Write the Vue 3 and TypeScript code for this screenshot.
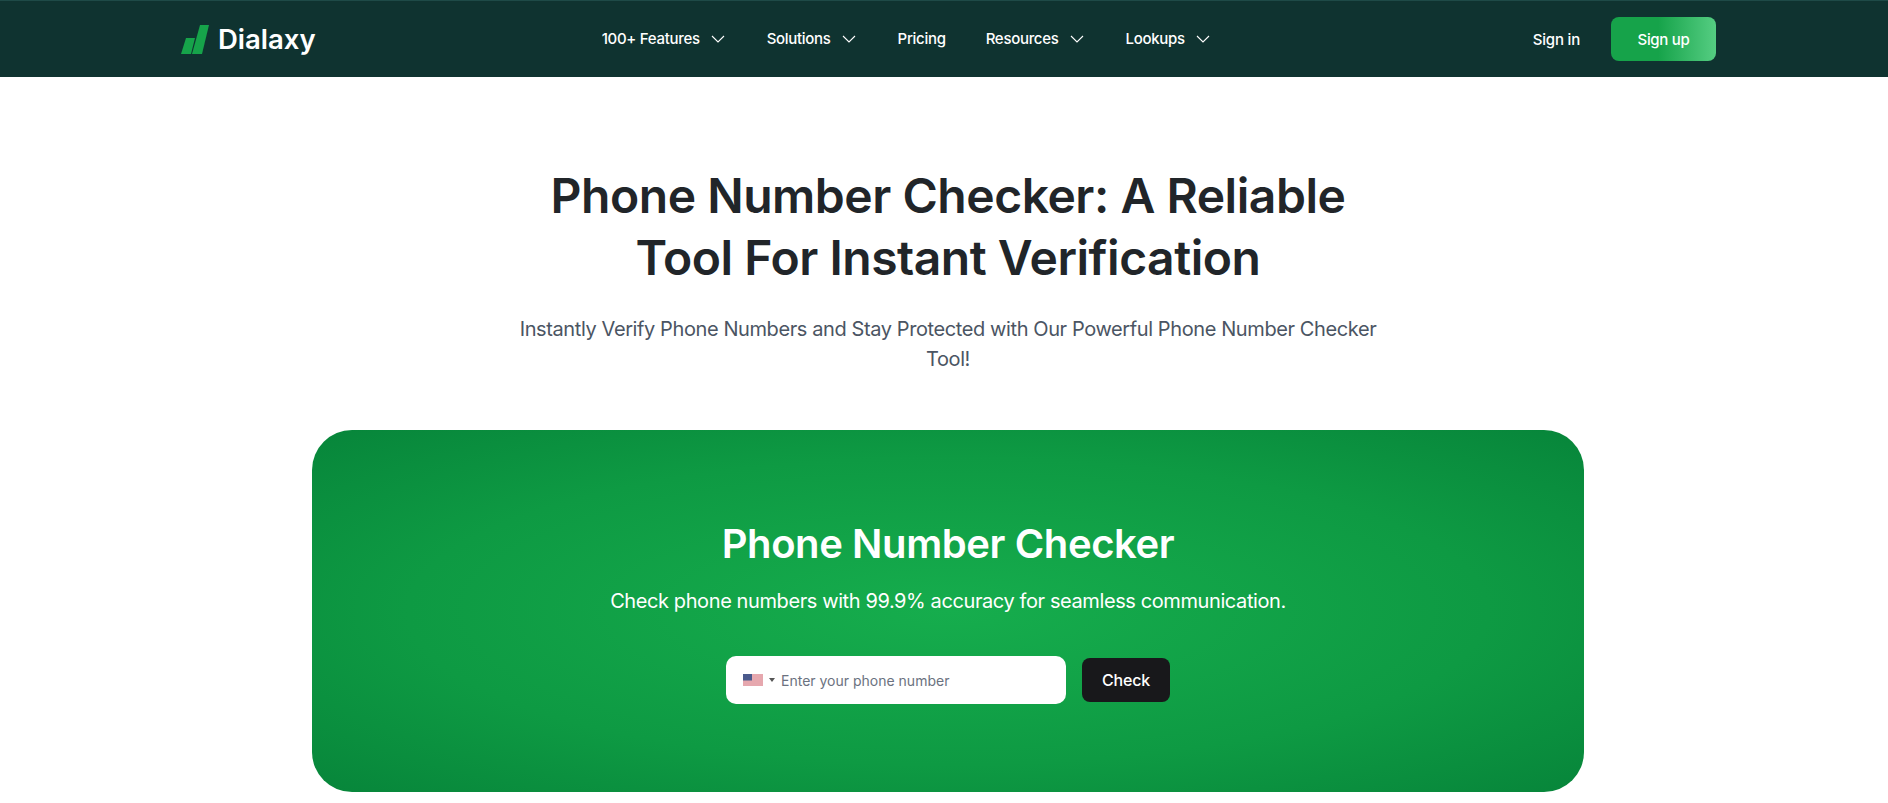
<script setup lang="ts">
interface NavItem {
  label: string
  caret: boolean
}

const navItems: NavItem[] = [
  { label: '100+ Features', caret: true },
  { label: 'Solutions', caret: true },
  { label: 'Pricing', caret: false },
  { label: 'Resources', caret: true },
  { label: 'Lookups', caret: true },
]
</script>

<template>
  <div class="page">
    <header class="topbar">
      <a class="logo">
        <svg class="logo-mark" width="28" height="29" viewBox="0 0 28 29">
          <path d="M5 13h9l-4 16H0z" fill="#16a34a" />
          <path d="M19 0h9l-7 29H11z" fill="#16a34a" />
        </svg>
        <span class="logo-text">Dialaxy</span>
      </a>
      <nav class="menu">
        <a v-for="item in navItems" :key="item.label" class="menu-item">
          {{ item.label }}
          <svg v-if="item.caret" class="caret" width="14" height="8" viewBox="0 0 14 8" fill="none">
            <path d="M1 1l6 6 6-6" stroke="#fff" stroke-width="1.1" />
          </svg>
        </a>
      </nav>
      <div class="actions">
        <a class="signin">Sign in</a>
        <a class="signup">Sign up</a>
      </div>
    </header>

    <main class="content">
      <section class="hero">
        <h1>Phone Number Checker: A Reliable<br />Tool For Instant Verification</h1>
        <p>Instantly Verify Phone Numbers and Stay Protected with Our Powerful Phone Number Checker Tool!</p>
      </section>

      <section class="checker">
        <h2>Phone Number Checker</h2>
        <p>Check phone numbers with 99.9% accuracy for seamless communication.</p>
        <form class="check-form" @submit.prevent>
          <div class="phone-field">
            <svg class="flag" width="20" height="12" viewBox="0 0 20 12">
              <rect width="20" height="12" fill="#f3dfe0" />
              <path d="M0 1h20M0 3h20M0 5h20M0 7h20M0 9h20M0 11h20" stroke="#d9707c" stroke-width="1" />
              <rect width="9" height="6.5" fill="#4a5a8c" />
            </svg>
            <span class="flag-caret"></span>
            <input type="text" placeholder="Enter your phone number" />
          </div>
          <button type="submit">Check</button>
        </form>
      </section>
    </main>
  </div>
</template>

<style scoped>
.page {
  font-family: Inter, "Liberation Sans", sans-serif;
  height: 803px;
  overflow: hidden;
  background: #fff;
}
.topbar {
  height: 77px;
  box-sizing: border-box;
  border-top: 1px solid #1e4a47;
  background: #0f3330;
  display: flex;
  align-items: center;
  padding: 0 172px 0 181px;
}
.logo {
  display: flex;
  align-items: center;
  gap: 9px;
}
.logo-text {
  color: #fff;
  font-size: 27.5px;
  font-weight: 600;
}
.menu {
  display: flex;
  align-items: center;
  gap: 40px;
  margin-left: 286px;
  margin-top: -1px;
}
.menu-item {
  display: flex;
  align-items: center;
  gap: 11px;
  color: #fff;
  font-size: 15px;
  font-weight: 500;
  letter-spacing: -0.3px;
}
.caret {
  margin-right: 2px;
}
.actions {
  display: flex;
  align-items: center;
  gap: 31px;
  margin-left: auto;
}
.signin {
  color: #fff;
  font-size: 15px;
  font-weight: 500;
  letter-spacing: -0.2px;
}
.signup {
  width: 105px;
  height: 44px;
  border-radius: 8px;
  display: flex;
  align-items: center;
  justify-content: center;
  color: #fff;
  font-size: 15px;
  font-weight: 500;
  letter-spacing: -0.3px;
  background: linear-gradient(90deg, #16a34a 0%, #16a34a 45%, #55cd82 100%);
}
.content {
  padding-left: 8px;
}
.hero {
  text-align: center;
  padding-top: 88px;
}
.hero h1 {
  margin: 0;
  font-size: 48px;
  line-height: 62px;
  font-weight: 600;
  letter-spacing: -0.47px;
  color: #212529;
}
.hero p {
  width: 880px;
  margin: 25px auto 0;
  font-size: 20px;
  line-height: 30px;
  letter-spacing: -0.4px;
  color: #4b5563;
}
.checker {
  width: 1272px;
  height: 362px;
  box-sizing: border-box;
  margin: 56px auto 0;
  padding-top: 90px;
  border-radius: 40px;
  text-align: center;
  color: #fff;
  background: radial-gradient(ellipse at center, #16ad4d 0%, #0e9a43 60%, #07853a 100%);
}
.checker h2 {
  margin: 0;
  font-size: 40px;
  line-height: 48px;
  font-weight: 600;
  letter-spacing: -0.4px;
}
.checker p {
  margin: 19px 0 0;
  font-size: 20px;
  line-height: 28px;
  letter-spacing: -0.4px;
}
.check-form {
  display: flex;
  align-items: center;
  justify-content: center;
  gap: 16px;
  margin-top: 41px;
}
.phone-field {
  width: 340px;
  height: 48px;
  box-sizing: border-box;
  padding-left: 17px;
  background: #fff;
  border-radius: 10px;
  display: flex;
  align-items: center;
}
.flag {
  flex: none;
}
.flag-caret {
  flex: none;
  margin: 0 6px;
  border-left: 3px solid transparent;
  border-right: 3px solid transparent;
  border-top: 4px solid #555;
}
.phone-field input {
  flex: 1;
  min-width: 0;
  border: 0;
  outline: 0;
  padding: 0;
  font: inherit;
  font-size: 14px;
  color: #111;
  background: transparent;
}
.phone-field input::placeholder {
  color: #6b7280;
  opacity: 1;
}
.check-form button {
  width: 88px;
  height: 44px;
  border: 0;
  border-radius: 8px;
  background: #18181b;
  color: #fff;
  font: inherit;
  font-size: 16px;
  font-weight: 500;
  letter-spacing: -0.2px;
}
</style>

<style>
html,
body {
  margin: 0;
  background: #fff;
}
</style>
